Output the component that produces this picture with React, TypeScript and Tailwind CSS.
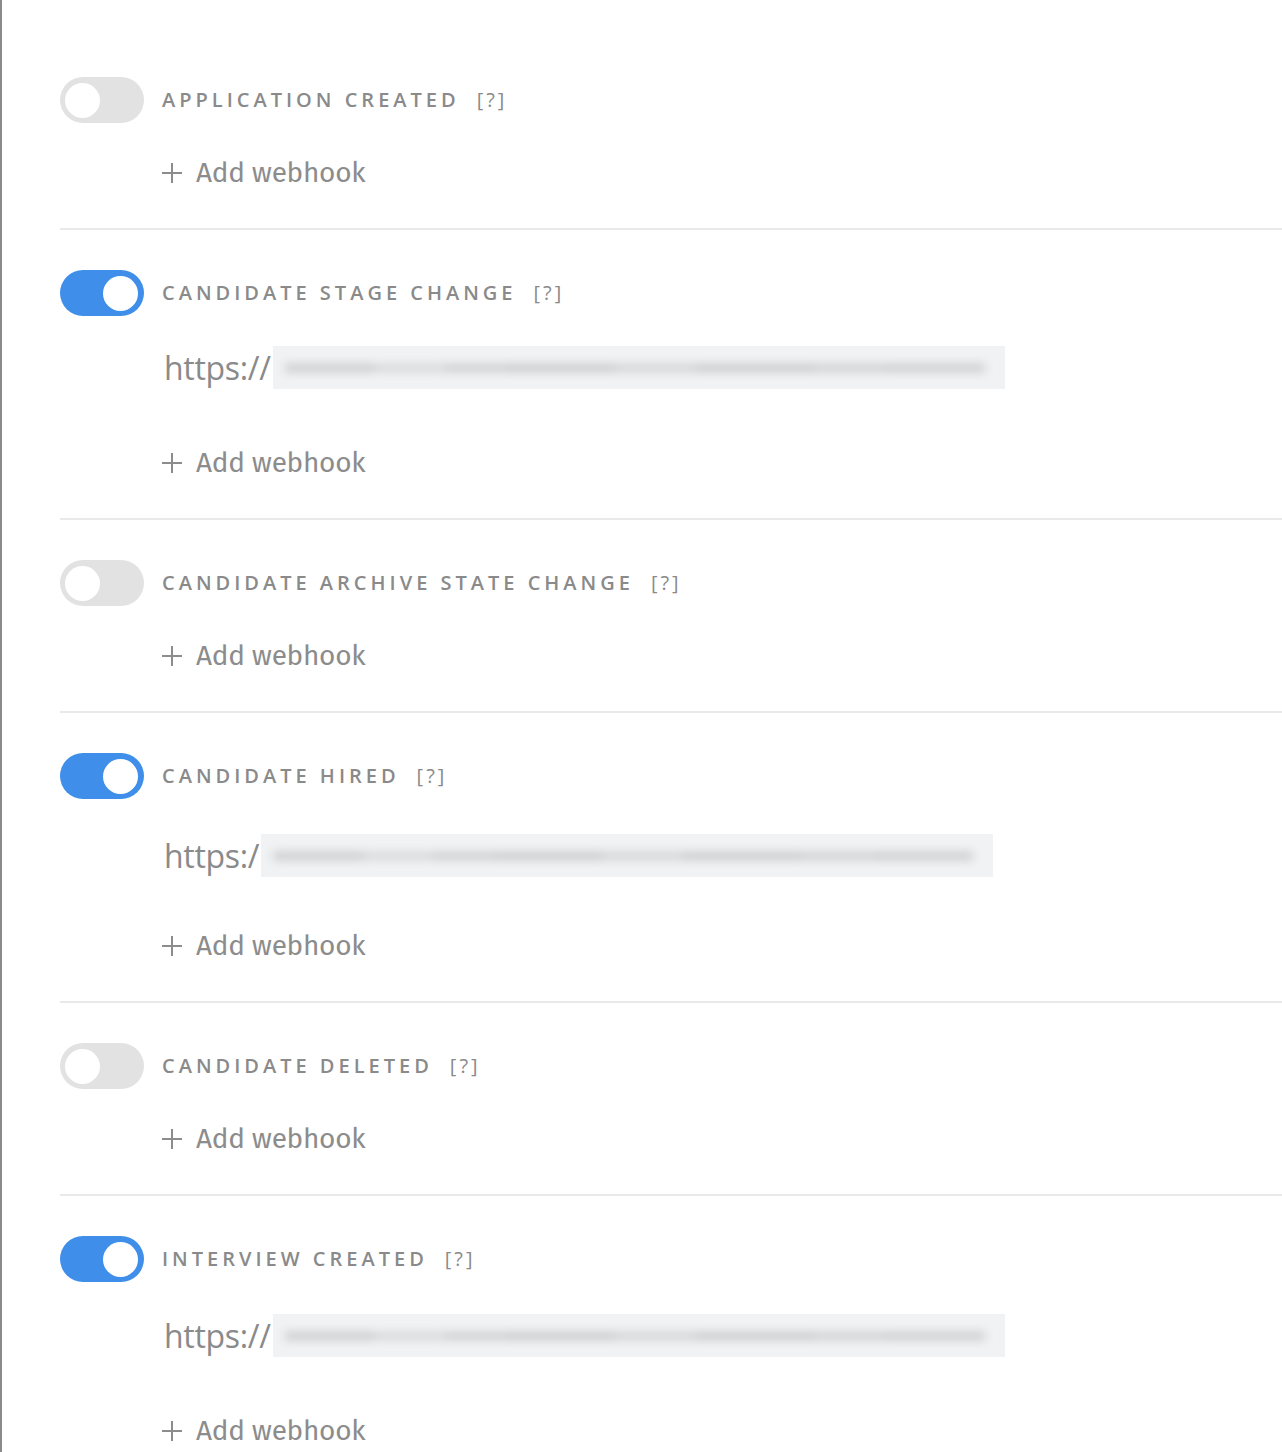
import React from "react";

type Item = {
  label: string;
  on: boolean;
  url?: string;
  urlGapTop?: string;
  addGapTop: string;
};

const items: Item[] = [
  { label: "APPLICATION CREATED", on: false, addGapTop: "mt-[32px]" },
  { label: "CANDIDATE STAGE CHANGE", on: true, url: "https://", urlGapTop: "mt-[30px]", addGapTop: "mt-[56px]" },
  { label: "CANDIDATE ARCHIVE STATE CHANGE", on: false, addGapTop: "mt-[32px]" },
  { label: "CANDIDATE HIRED", on: true, url: "https:/", urlGapTop: "mt-[35px]", addGapTop: "mt-[51px]" },
  { label: "CANDIDATE DELETED", on: false, addGapTop: "mt-[32px]" },
  { label: "INTERVIEW CREATED", on: true, url: "https://", urlGapTop: "mt-[32px]", addGapTop: "mt-[56px]" },
];

function Toggle({ on }: { on: boolean }) {
  return (
    <div
      className={
        on
          ? "w-[84px] h-[46px] rounded-full bg-[#3f8fea] flex items-center justify-end px-[6px] shrink-0"
          : "w-[84px] h-[46px] rounded-full bg-[#e2e2e2] flex items-center justify-start px-[5px] shrink-0"
      }
    >
      <div className="w-[35px] h-[35px] rounded-full bg-white" />
    </div>
  );
}

function BlurredUrl() {
  return (
    <div className="w-[732px] h-[43px] bg-[#f1f2f3] flex items-center px-[12px] overflow-hidden">
      <div className="flex w-full items-center blur-[5px]">
        <div className="h-[8px] w-[90px] bg-[#c9cacd]" />
        <div className="h-[8px] w-[70px] bg-[#d6d7da]" />
        <div className="h-[8px] w-[60px] bg-[#cccdd0]" />
        <div className="h-[8px] w-[110px] bg-[#c7c9cc]" />
        <div className="h-[8px] w-[80px] bg-[#d2d3d6]" />
        <div className="h-[8px] w-[120px] bg-[#c7c9cc]" />
        <div className="h-[8px] w-[70px] bg-[#cecfd2]" />
        <div className="h-[8px] w-[100px] bg-[#cacbce]" />
      </div>
    </div>
  );
}

function Plus() {
  return (
    <svg width="22" height="22" viewBox="0 0 22 22" className="shrink-0">
      <path d="M11 1 V21 M1 11 H21" stroke="#8c8c8c" strokeWidth="2" fill="none" />
    </svg>
  );
}

export default function App() {
  return (
    <div
      className="min-h-[1452px] bg-white border-l-2 border-[#8a8a8a] pl-[58px] pt-[77px] overflow-hidden"
      style={{ fontFamily: '"Open Sans", "Liberation Sans", sans-serif' }}
    >
      {items.map((it, i) => (
        <div key={i} className={i === 0 ? "" : "pt-[40px]"}>
          <div className="flex items-center h-[46px]">
            <Toggle on={it.on} />
            <div className="ml-[18px] text-[20px] tracking-[0.2em] text-[#8a8a8a] font-semibold leading-none whitespace-nowrap">
              {it.label}
              <span className="ml-[17px] tracking-[0.15em] font-normal">[?]</span>
            </div>
          </div>
          {it.url && (
            <div className={"flex items-center pl-[104px] " + it.urlGapTop}>
              <span className="text-[32px] text-[#8a8a8a] leading-[43px] tracking-[-0.01em] mr-[2px]">{it.url}</span>
              <BlurredUrl />
            </div>
          )}
          <div className={"flex items-center h-[36px] pl-[101px] " + it.addGapTop}>
            <Plus />
            <span
              className="ml-[13px] text-[28px] text-[#8c8c8c] leading-[36px] tracking-[-0.01em]"
              style={{ fontFamily: '"Fira Sans", "Open Sans", "Liberation Sans", sans-serif' }}
            >
              Add webhook
            </span>
          </div>
          {i < items.length - 1 && <div className="mt-[37px] h-[2px] bg-[#e8e9ea]" />}
        </div>
      ))}
    </div>
  );
}
